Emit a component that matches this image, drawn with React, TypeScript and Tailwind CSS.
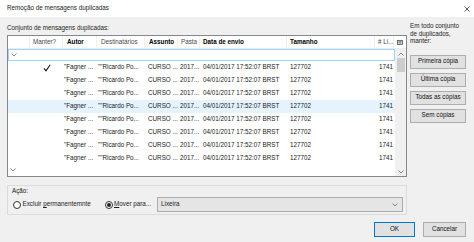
import React from "react"

const cols = [
  { w: "w-[22px]", head: "", hc: "", cc: "", bold: false },
  { w: "w-[33px]", head: "Manter?", hc: "pl-[3px]", cc: "justify-center", bold: false },
  { w: "w-[34px]", head: "Autor", hc: "pl-[4px]", cc: "pl-[1px]", bold: true },
  { w: "w-[48px]", head: "Destinatários", hc: "pl-[4px]", cc: "pl-[1px]", bold: false },
  { w: "w-[33px]", head: "Assunto", hc: "pl-[4px]", cc: "pl-[3px]", bold: true },
  { w: "w-[22px]", head: "Pasta", hc: "pl-[3px]", cc: "pl-[2px]", bold: false },
  { w: "w-[87px]", head: "Data de envio", hc: "pl-[3px]", cc: "pl-[3px]", bold: true },
  { w: "w-[88px]", head: "Tamanho", hc: "pl-[3px]", cc: "pl-[3px]", bold: true },
  { w: "w-[19px]", head: "# Li...", hc: "pl-[3px]", cc: "justify-end pr-[1px]", bold: false },
]

const rowValues = ["", "", "\"Fagner ...", "\"\"Ricardo Po...", "CURSO ...", "2017...", "04/01/2017 17:52:07 BRST", "127702", "1741"]

function Chevron({ up = false }: { up?: boolean }) {
  return (
    <svg width="6" height="4" viewBox="0 0 6 4" className="block">
      <path d={up ? "M0.5 3.5 L3 1 L5.5 3.5" : "M0.5 0.5 L3 3 L5.5 0.5"} fill="none" stroke="#7a7a7a" strokeWidth="0.9" />
    </svg>
  )
}

function Check() {
  return (
    <svg width="8" height="8" viewBox="0 0 8 8" className="block">
      <path d="M1 4.4 L3 6.8 L7.2 0.8" fill="none" stroke="#111" strokeWidth="1.1" />
    </svg>
  )
}

function Radio({ checked }: { checked: boolean }) {
  return (
    <span className="flex h-[8px] w-[8px] items-center justify-center rounded-full border border-[#333] bg-white">
      {checked && <span className="h-[4px] w-[4px] rounded-full bg-[#222]" />}
    </span>
  )
}

function SideButton({ label }: { label: string }) {
  return (
    <button className="flex h-[14px] w-[56px] items-center justify-center border border-[#adadad] bg-[#e1e1e1] leading-none text-[#111]">
      {label}
    </button>
  )
}

export default function App() {
  return (
    <div className="h-[242px] w-[474px] overflow-hidden bg-[#f0f0f0] font-['Liberation_Sans',Arial,sans-serif] text-[6.3px] text-[#1b1b1b]">
      {/* Title bar */}
      <div className="flex h-[17px] items-center justify-between bg-white pl-[7px] pr-[4px]">
        <span className="leading-none text-[#222]">Remoção de mensagens duplicadas</span>
        <svg width="6" height="6" viewBox="0 0 6 6" className="block">
          <path d="M0.5 0.5 L5.5 5.5 M5.5 0.5 L0.5 5.5" stroke="#333" strokeWidth="0.8" />
        </svg>
      </div>

      <div className="flex gap-[3px] px-[7px]">
        {/* Left: list */}
        <div className="w-[400px]">
          <div className="mt-[7px] leading-[7px] text-[#222]">Conjunto de mensagens duplicadas:</div>
          <div className="mt-[4px] h-[142px] border border-[#828790] bg-white">
            {/* Header */}
            <div className="flex h-[13px] items-center border-b border-[#ececec]">
              {cols.map((c, i) => (
                <div
                  key={i}
                  className={`flex h-full items-center border-r border-[#efefef] ${c.w} ${c.hc} ${c.bold ? "font-bold text-black" : "text-[#4a4a4a]"}`}
                >
                  <span className="whitespace-nowrap leading-none">{c.head}</span>
                </div>
              ))}
              <div className="flex h-full w-[11px] items-center justify-center">
                <svg width="6" height="5" viewBox="0 0 6 5" className="block">
                  <rect x="0.5" y="0.5" width="5" height="4" fill="none" stroke="#555" strokeWidth="0.8" />
                  <path d="M2.2 0.5 V4.5 M3.8 0.5 V4.5 M0.5 2 H5.5" stroke="#555" strokeWidth="0.6" />
                </svg>
              </div>
            </div>

            <div className="flex h-[127px]">
              <div className="w-[387px]">
                {/* group row */}
                <div className="flex h-[12px] items-center border border-[#9fd3ff] pl-[2px]">
                  <Chevron />
                </div>
                {Array.from({ length: 8 }).map((_, r) => (
                  <div key={r} className={`flex h-[13px] items-center ${r === 3 ? "bg-[#e5f3ff]" : ""}`}>
                    {cols.map((c, i) => (
                      <div key={i} className={`flex h-full items-center ${c.w} ${c.cc}`}>
                        {i === 1 && r === 0 ? (
                          <Check />
                        ) : (
                          <span className="whitespace-nowrap leading-none">{rowValues[i]}</span>
                        )}
                      </div>
                    ))}
                  </div>
                ))}
                <div className="flex h-[10px] items-center pl-[2px]">
                  <Chevron />
                </div>
              </div>

              {/* scrollbar */}
              <div className="flex w-[11px] flex-col items-center bg-[#f0f0f0]">
                <div className="flex h-[9px] items-center">
                  <Chevron up />
                </div>
                <div className="h-[14px] w-[8px] bg-[#cdcdcd]" />
                <div className="flex-1" />
                <div className="flex h-[9px] items-center">
                  <Chevron />
                </div>
              </div>
            </div>
          </div>
        </div>

        {/* Right panel */}
        <div className="w-[57px]">
          <div className="mt-[5px] leading-[7.5px] text-[#222]">
            Em todo conjunto
            <br />
            de duplicados,
            <br />
            manter:
          </div>
          <div className="mt-[10px] flex flex-col gap-[4px]">
            <SideButton label="Primeira cópia" />
            <SideButton label="Última cópia" />
            <SideButton label="Todas as cópias" />
            <SideButton label="Sem cópias" />
          </div>
        </div>
      </div>

      {/* Action group */}
      <div className="ml-[7px] mt-[8px] w-[400px] border border-[#dcdcdc] pb-[2px] pr-[3px] pt-[1px]">
        <div className="pl-[4px] leading-[7px] text-[#222]">Ação:</div>
        <div className="mt-[3px] flex h-[15px] items-center pl-[5px]">
          <div className="flex w-[92px] items-center gap-[1.5px]">
            <Radio checked={false} />
            <span className="leading-none">
              Excluir <span className="underline">p</span>ermanentemnte
            </span>
          </div>
          <div className="flex w-[52px] items-center gap-[1px]">
            <Radio checked />
            <span className="leading-none">
              <span className="underline">M</span>over para...
            </span>
          </div>
          <div className="flex h-[15px] flex-1 items-center justify-between border border-[#acacac] bg-[#e5e5e5] pl-[3px] pr-[4px]">
            <span className="leading-none">Lixeira</span>
            <Chevron />
          </div>
        </div>
      </div>

      {/* Bottom buttons */}
      <div className="mt-[7px] flex justify-end gap-[8px] pr-[8px]">
        <button className="flex h-[15px] w-[41px] items-center justify-center border border-[#0078d7] bg-[#e1e1e1] leading-none text-[#111]">
          OK
        </button>
        <button className="flex h-[15px] w-[43px] items-center justify-center border border-[#adadad] bg-[#e1e1e1] leading-none text-[#111]">
          Cancelar
        </button>
      </div>
    </div>
  )
}
